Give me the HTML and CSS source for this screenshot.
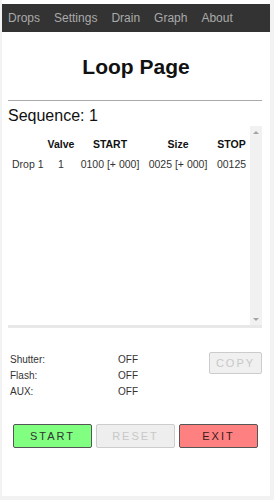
FILE: index.html
```html
<!DOCTYPE html>
<html lang="en">
<head>
    <meta charset="UTF-8">
    <meta name="viewport" content="width=device-width, initial-scale=1.0">
    <title>Loop Page</title>
    <link rel="stylesheet" href="styles.css">
</head>
<body>
    <div class="page">
        <div class="nav">
            <a>Drops</a>
            <a>Settings</a>
            <a>Drain</a>
            <a>Graph</a>
            <a>About</a>
        </div>
        <h1 class="title">Loop Page</h1>
        <div class="content">
            <hr class="line">
            <div class="sequence">Sequence: 1</div>
            <div class="box">
                <table class="drops">
                    <tr>
                        <th></th>
                        <th>Valve</th>
                        <th>START</th>
                        <th>Size</th>
                        <th>STOP</th>
                    </tr>
                    <tr>
                        <td>Drop 1</td>
                        <td>1</td>
                        <td>0100 [+ 000]</td>
                        <td>0025 [+ 000]</td>
                        <td>00125</td>
                    </tr>
                </table>
                <div class="scrollbar">
                    <span class="arrow arrow__up"></span>
                    <span class="arrow arrow__down"></span>
                </div>
            </div>
            <div class="status">
                <div class="status__list">
                    <div class="status__row"><span class="status__label">Shutter:</span><span>OFF</span></div>
                    <div class="status__row"><span class="status__label">Flash:</span><span>OFF</span></div>
                    <div class="status__row"><span class="status__label">AUX:</span><span>OFF</span></div>
                </div>
                <div class="btn btn__copy">COPY</div>
            </div>
            <div class="controls">
                <div class="btn btn__start">START</div>
                <div class="btn btn__reset">RESET</div>
                <div class="btn btn__exit">EXIT</div>
            </div>
        </div>
    </div>
</body>
</html>
```

FILE: styles.css
```css
*{
    box-sizing: border-box;
    font-family: "Liberation Sans", Arial, sans-serif;
}
body{
    margin: 0;
    padding: 0 4px 4px 2px;
    background-color: #f2f2f2;
}
.page{
    background-color: #fff;
    min-height: 496px;
    padding-top: 4px;
}
.nav{
    display: flex;
    height: 28px;
    align-items: center;
    padding-left: 6px;
    gap: 14px;
    background-color: #333;
    font-size: 12px;
}
.nav a{
    color: #aaa;
}
.title{
    margin: 23px 0 0 0;
    font-size: 21px;
    line-height: 24px;
    text-align: center;
    color: #111;
}
.content{
    padding: 0 8px 0 6px;
}
.line{
    margin: 21px 0 0 0;
    border: none;
    border-top: 1px solid #aaa;
}
.sequence{
    margin-top: 6px;
    font-size: 16px;
    line-height: 18px;
    color: #111;
}
.box{
    display: flex;
    margin-top: 1px;
    height: 202px;
    border-bottom: 3px solid #e8e8e8;
}
.drops{
    width: 242px;
    margin-top: 8px;
    align-self: flex-start;
    border-collapse: collapse;
    table-layout: fixed;
    font-size: 10.5px;
    color: #333;
}
.drops th, .drops td{
    height: 20px;
    padding: 0;
    text-align: center;
    white-space: nowrap;
}
.drops th{
    color: #111;
}
.drops th:nth-child(1){ width: 37px; }
.drops th:nth-child(2){ width: 32px; }
.drops th:nth-child(3){ width: 66px; }
.drops th:nth-child(4){ width: 70px; }
.drops th:nth-child(5){ width: 37px; }
.drops td:first-child{
    text-align: left;
    padding-left: 4px;
}
.scrollbar{
    margin-left: auto;
    width: 12px;
    background-color: #f1f1f1;
    display: flex;
    flex-direction: column;
    justify-content: space-between;
    align-items: center;
    padding: 5px 0 4px 0;
}
.arrow{
    width: 0;
    height: 0;
    border-left: 3px solid transparent;
    border-right: 3px solid transparent;
}
.arrow__up{
    border-bottom: 3px solid #a3a3a3;
}
.arrow__down{
    border-top: 3px solid #a3a3a3;
}
.status{
    display: flex;
    justify-content: space-between;
    align-items: flex-start;
    margin-top: 24px;
    padding-left: 2px;
}
.status__row{
    display: flex;
    font-size: 10px;
    line-height: 16px;
    color: #333;
}
.status__label{
    width: 108px;
}
.btn{
    text-align: center;
    border-radius: 2px;
    font-size: 11px;
    letter-spacing: 2px;
    color: #333;
}
.btn__copy{
    width: 53px;
    height: 22px;
    line-height: 20px;
    border: 1px solid #ccc;
    background-color: #f0f0f0;
    color: #c8c8c8;
}
.controls{
    display: flex;
    gap: 4px;
    margin-top: 24px;
    padding-left: 5px;
}
.controls .btn{
    width: 79px;
    height: 24px;
    line-height: 22px;
    border: 1px solid #555;
}
.btn__start{
    background-color: #80ff80;
}
.btn__reset{
    background-color: #eee;
    color: #c8c8c8;
}
.controls .btn__reset{
    border-color: #ccc;
}
.btn__exit{
    background-color: #ff8080;
    color: #3a1a1a;
}
```
